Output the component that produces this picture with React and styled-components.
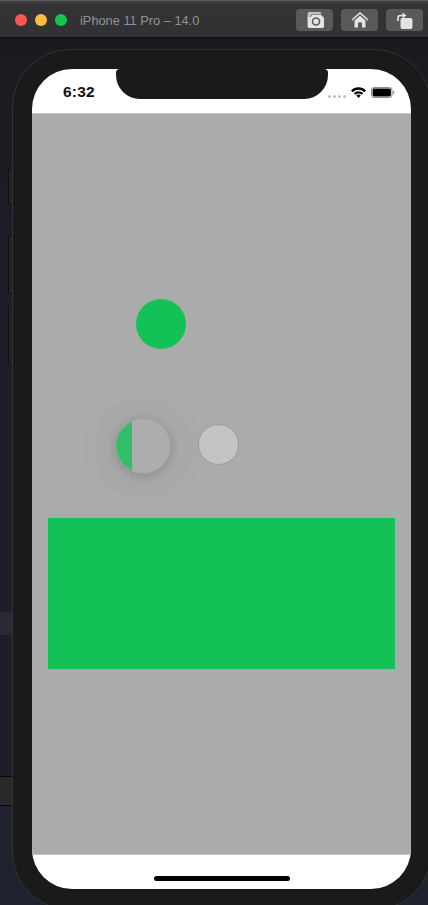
import React from "react";
import styled, { createGlobalStyle } from "styled-components";

const GlobalStyle = createGlobalStyle`
  html, body {
    margin: 0;
    padding: 0;
    height: 100%;
    overflow: hidden;
    background: #1d1e29;
  }
`;

const Page = styled.div`
  width: 428px;
  height: 905px;
  display: flex;
  flex-direction: column;
  overflow: hidden;
  font-family: "Liberation Sans", Arial, sans-serif;
`;

const TitleBar = styled.div`
  height: 38px;
  flex-shrink: 0;
  box-sizing: border-box;
  display: flex;
  align-items: center;
  padding: 2px 5px 0 15px;
  background: linear-gradient(#444446, #333335 12%, #323234);
  border-top: 1px solid #5c5c5e;
  border-bottom: 1px solid #0b0b0c;
`;

const Light = styled.span`
  width: 12px;
  height: 12px;
  border-radius: 50%;
  margin-right: 8px;
  background: ${(p) => p.color};
`;

const Title = styled.span`
  margin-left: 5px;
  flex: 1;
  font-size: 12.8px;
  color: #929294;
`;

const ToolButtons = styled.div`
  display: flex;
  gap: 8px;
`;

const ToolButton = styled.div`
  width: 37px;
  height: 22px;
  border-radius: 4px;
  background: #59595b;
  display: flex;
  align-items: center;
  justify-content: center;
`;

const Desktop = styled.div`
  flex: 1;
  display: flex;
  padding: 11px 0 0 12px;
  background: linear-gradient(
    #1b1b1f 0,
    #1d1e29 30%,
    #1d1e29 574px,
    #2a2a33 574px,
    #2a2a33 597px,
    #1d1e29 597px,
    #1d1e29 738px,
    #08080a 738px,
    #08080a 739px,
    #29292b 739px,
    #29292b 767px,
    #08080a 767px,
    #08080a 768px,
    #1f222c 768px
  );
`;

const Device = styled.div`
  position: relative;
  flex-shrink: 0;
  box-sizing: border-box;
  width: 420px;
  height: 861px;
  padding: 19px;
  border: 1px solid #333335;
  border-radius: 58px;
  background: #1a1a1a;
`;

const SideButton = styled.div`
  position: absolute;
  left: -5px;
  top: ${(p) => p.top}px;
  width: 4px;
  height: ${(p) => p.h}px;
  box-sizing: border-box;
  border-radius: 2px 0 0 2px;
  background: #232325;
  border: 1px solid #101012;
  border-right: 0;
`;

const Screen = styled.div`
  position: relative;
  height: 820px;
  width: 379px;
  display: flex;
  flex-direction: column;
  overflow: hidden;
  border-radius: 40px;
  background: #fff;
`;

const Notch = styled.div`
  position: absolute;
  top: 0;
  left: 84px;
  width: 212px;
  height: 30px;
  border-radius: 4px 4px 24px 24px;
  background: #1a1a1a;
`;

const StatusBar = styled.div`
  height: 44px;
  flex-shrink: 0;
  box-sizing: border-box;
  display: flex;
  align-items: center;
  justify-content: space-between;
  padding: 2px 16px 0 31px;
`;

const Time = styled.span`
  font-size: 15.5px;
  font-weight: 700;
  color: #111;
  letter-spacing: 0.2px;
`;

const StatusIcons = styled.div`
  display: flex;
  align-items: center;
  gap: 5px;
`;

const SignalDots = styled.div`
  display: flex;
  gap: 2px;
  margin-top: 8px;
`;

const SignalDot = styled.span`
  width: 3px;
  height: 3px;
  border-radius: 50%;
  background: #bdbdbd;
`;

const Content = styled.div`
  flex: 1;
  box-sizing: border-box;
  display: flex;
  flex-direction: column;
  padding: 185px 16px 0;
  background: #ababab;
  border-top: 1px solid #c4c4c4;
  border-bottom: 1px solid #c4c4c4;
`;

const Dot = styled.div`
  width: 50px;
  height: 50px;
  margin-left: 88px;
  border-radius: 50%;
  background: #12c257;
`;

const SliderRow = styled.div`
  display: flex;
  align-items: flex-start;
  gap: 27px;
  margin: 69px 0 0 67px;
`;

const Thumb = styled.div`
  width: 56px;
  height: 56px;
  box-sizing: border-box;
  flex-shrink: 0;
  display: flex;
  overflow: hidden;
  border-radius: 50%;
  background: #adadad;
  border: 1px solid #a2a2a2;
  box-shadow: 0 2px 8px rgba(0, 0, 0, 0.14), 0 2px 44px rgba(0, 0, 0, 0.09);
`;

const ThumbFill = styled.div`
  width: 16px;
  background: #34bd68;
`;

const Knob = styled.div`
  width: 41px;
  height: 41px;
  box-sizing: border-box;
  margin-top: 6px;
  border-radius: 50%;
  background: #c4c4c4;
  border: 1px solid #9c9c9c;
`;

const Banner = styled.div`
  height: 151px;
  margin-top: 44px;
  background: #12c257;
`;

const HomeArea = styled.div`
  height: 34px;
  flex-shrink: 0;
  box-sizing: border-box;
  display: flex;
  justify-content: center;
  padding-top: 21px;
`;

const HomeIndicator = styled.div`
  width: 136px;
  height: 5px;
  border-radius: 3px;
  background: #000;
`;

const CameraIcon = () => (
  <svg width="20" height="18" viewBox="0 0 18 17">
    <path d="M2 6V2.5Q2 1 3.5 1H13Q15 1 15 3H6L3.5 6Z" fill="#c4c4c4" />
    <path d="M2 5.5H5L6.5 3.5H14.5L16.5 5.5Q17.5 5.5 17.5 7V14.5Q17.5 16 16 16H3.5Q2 16 2 14.5Z" fill="#e4e4e4" />
    <circle cx="10" cy="10" r="4" fill="#59595b" />
    <circle cx="10" cy="10" r="2.6" fill="#e4e4e4" />
  </svg>
);

const HomeIcon = () => (
  <svg width="18" height="16" viewBox="0 0 18 16">
    <path d="M1 8L9 1L17 8" fill="none" stroke="#e4e4e4" strokeWidth="1.6" />
    <path d="M3.5 8.5L9 3.7L14.5 8.5V15.5H11V10.5H7V15.5H3.5Z" fill="#e4e4e4" />
  </svg>
);

const RotateIcon = () => (
  <svg width="17" height="17" viewBox="0 0 17 17">
    <rect x="4.5" y="6" width="12" height="11" rx="2" fill="#e4e4e4" />
    <path d="M2 9V6Q2 3.5 4.5 3.5H7" fill="none" stroke="#e4e4e4" strokeWidth="1.6" />
    <path d="M6.5 0.5L10.5 3.5L6.5 6.5Z" fill="#e4e4e4" />
  </svg>
);

const WifiIcon = () => (
  <svg width="15" height="11" viewBox="0 0 15 11">
    <path d="M0 3.4A10.4 10.4 0 0 1 15 3.4L13.2 5.2A8 8 0 0 0 1.8 5.2Z" fill="#000" />
    <path d="M2.8 6.2A6.6 6.6 0 0 1 12.2 6.2L10.6 7.8A4.4 4.4 0 0 0 4.4 7.8Z" fill="#000" />
    <path d="M5.3 8.6A3.1 3.1 0 0 1 9.7 8.6L7.5 11Z" fill="#000" />
  </svg>
);

const BatteryIcon = () => (
  <svg width="24" height="11" viewBox="0 0 24 11">
    <rect x="0.5" y="0.5" width="20.5" height="10" rx="2.5" fill="none" stroke="#8e8e8e" />
    <rect x="1.6" y="1.6" width="18.3" height="7.8" rx="1.4" fill="#000" />
    <rect x="22" y="3.7" width="1.2" height="3.6" rx="0.6" fill="#9a9a9a" />
  </svg>
);

export default function App() {
  return (
    <Page>
      <GlobalStyle />
      <TitleBar>
        <Light color="#fc5753" />
        <Light color="#fdbc40" />
        <Light color="#13c64f" />
        <Title>iPhone 11 Pro – 14.0</Title>
        <ToolButtons>
          <ToolButton><CameraIcon /></ToolButton>
          <ToolButton><HomeIcon /></ToolButton>
          <ToolButton><RotateIcon /></ToolButton>
        </ToolButtons>
      </TitleBar>
      <Desktop>
        <Device>
          <SideButton top={119} h={36} />
          <SideButton top={185} h={59} />
          <SideButton top={255} h={59} />
          <Screen>
            <StatusBar>
              <Time>6:32</Time>
              <StatusIcons>
                <SignalDots>
                  <SignalDot />
                  <SignalDot />
                  <SignalDot />
                  <SignalDot />
                </SignalDots>
                <WifiIcon />
                <BatteryIcon />
              </StatusIcons>
            </StatusBar>
            <Notch />
            <Content>
              <Dot />
              <SliderRow>
                <Thumb>
                  <ThumbFill />
                </Thumb>
                <Knob />
              </SliderRow>
              <Banner />
            </Content>
            <HomeArea>
              <HomeIndicator />
            </HomeArea>
          </Screen>
        </Device>
      </Desktop>
    </Page>
  );
}
